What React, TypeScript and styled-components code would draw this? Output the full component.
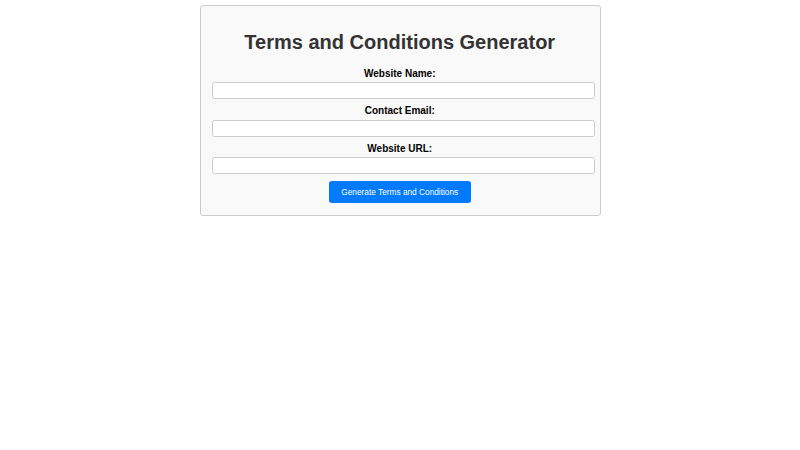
import React from "react";
import styled, { createGlobalStyle } from "styled-components";

const GlobalStyle = createGlobalStyle`
  html, body {
    margin: 0;
    padding: 0;
    background: #fff;
  }
  body {
    margin: 5px;
    font-family: "Liberation Sans", Arial, sans-serif;
    font-size: 10px;
  }
`;

const Card = styled.div`
  box-sizing: border-box;
  max-width: 401px;
  margin: 0 auto;
  padding: 12px 12px 12px 11.5px;
  background: #f9f9f9;
  border: 1px solid #ccc;
  border-radius: 3px;
  text-align: center;
`;

const Title = styled.h1`
  margin: 13.4px 0;
  font-size: 20px;
  line-height: 23px;
  font-weight: bold;
  color: #333;
`;

const Form = styled.form`
  margin: 0;
`;

const Label = styled.label`
  display: block;
  margin-bottom: 3px;
  font-size: 10px;
  line-height: 11.5px;
  font-weight: bold;
  color: #000;
`;

const Input = styled.input`
  display: block;
  box-sizing: border-box;
  width: calc(100% + 7.5px);
  height: 17px;
  margin: 0 0 6px;
  padding: 3px;
  font-family: "Liberation Sans", Arial, sans-serif;
  font-size: 8.3px;
  background: #fff;
  border: 1px solid #ccc;
  border-radius: 2.5px;
`;

const Button = styled.button`
  height: 22px;
  margin-top: 1px;
  padding: 0 12.5px;
  font-family: "Liberation Sans", Arial, sans-serif;
  font-size: 8.3px;
  color: #fff;
  background: #007bff;
  border: none;
  border-radius: 3px;
  cursor: pointer;
  vertical-align: top;
`;

const fields = [
  { id: "websiteName", label: "Website Name:", type: "text" },
  { id: "contactEmail", label: "Contact Email:", type: "email" },
  { id: "websiteUrl", label: "Website URL:", type: "url" },
];

export default function App() {
  return (
    <>
      <GlobalStyle />
      <Card>
        <Title>Terms and Conditions Generator</Title>
        <Form onSubmit={(e) => e.preventDefault()}>
          {fields.map((f) => (
            <React.Fragment key={f.id}>
              <Label htmlFor={f.id}>{f.label}</Label>
              <Input id={f.id} type={f.type} />
            </React.Fragment>
          ))}
          <Button type="submit">Generate Terms and Conditions</Button>
        </Form>
      </Card>
    </>
  );
}
